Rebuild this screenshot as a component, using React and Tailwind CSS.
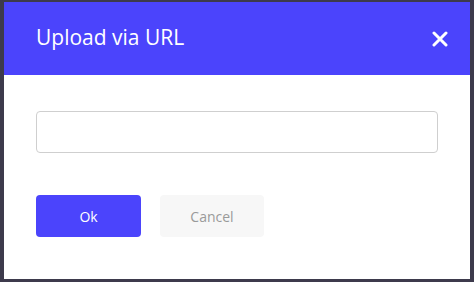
import React from 'react';

const App = () => {
  return (
    <div
      className="w-[474px] h-[282px] bg-[#3d3a4c] pt-[2px] pl-[4px] pr-[4px] pb-[3px]"
      style={{ fontFamily: '"Open Sans", "Noto Sans", sans-serif' }}
    >
      <div className="flex flex-col h-full bg-white">
        <div className="flex items-center justify-between h-[73px] bg-[#4b44fc] pl-[32px] pr-[22px]">
          <h2 className="text-[21px] leading-none text-white pb-[2px]">Upload via URL</h2>
          <button className="text-white">
            <svg width="16" height="16" viewBox="0 0 16 16" fill="none" stroke="currentColor" strokeWidth="3" strokeLinecap="round">
              <path d="M2 2 L14 14 M14 2 L2 14" />
            </svg>
          </button>
        </div>
        <div className="px-[32px] pt-[36px]">
          <input
            type="text"
            className="block w-[402px] h-[42px] rounded-[4px] border border-[#cfcfcf] px-3 text-sm outline-none"
          />
          <div className="flex gap-[19px] mt-[42px]">
            <button className="w-[105px] h-[42px] rounded-[4px] bg-[#4b44fc] text-white text-[14px]">
              Ok
            </button>
            <button className="w-[104px] h-[42px] rounded-[4px] bg-[#f7f7f7] text-[#9a9a9a] text-[14px]">
              Cancel
            </button>
          </div>
        </div>
      </div>
    </div>
  );
};

export default App;
